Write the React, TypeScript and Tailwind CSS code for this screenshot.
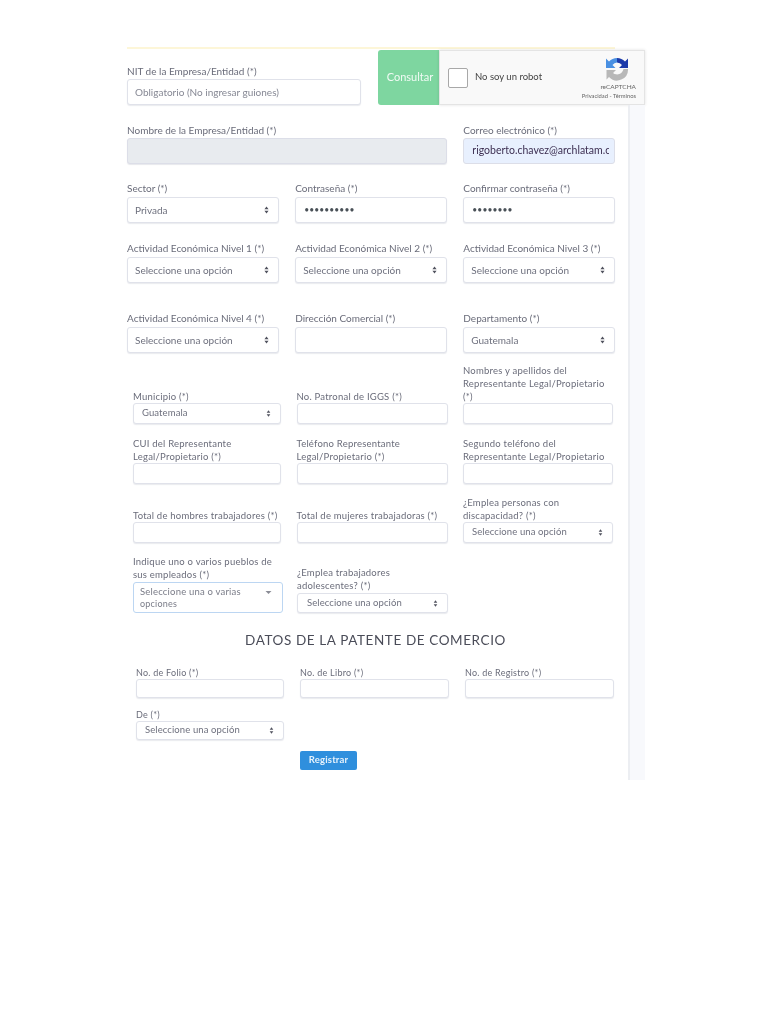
import type { ReactNode } from 'react';

const labelText = 'text-[10px] leading-[14px] text-[#6a6c7a]';
const smallText = 'text-[9.5px] leading-[13px] text-[#6a6c7a] tracking-[0.22px]';
const tinyLabel = 'text-[9px] leading-[12px] tracking-[0.25px] block';

function Carets({ className }: { className: string }) {
  return (
    <svg viewBox="0 0 6 10" className={className} fill="#50525e">
      <path d="M3 0.5 5.6 4H.4zM3 9.5.4 6h5.2z" />
    </svg>
  );
}

function Box({ className, children }: { className: string; children?: ReactNode }) {
  return (
    <div className={`flex items-center bg-white border border-[#e0e2ea] rounded-[3px] shadow-[0_1px_1px_rgba(120,125,150,0.16)] ${className}`}>
      {children}
    </div>
  );
}

function Select({ value, className, textClass, caretClass }: { value: string; className: string; textClass: string; caretClass: string }) {
  return (
    <Box className={`justify-between ${className}`}>
      <span className={textClass}>{value}</span>
      <Carets className={caretClass} />
    </Box>
  );
}

const bigSelect = (value: string) => (
  <Select value={value} className="h-[26px] pl-[7px] pr-[9px]" textClass="text-[10px] text-[#6e707e]" caretClass="w-[5px] h-[8px]" />
);
const midSelect = (value: string) => (
  <Select value={value} className="h-[21px] pl-[8px] pr-[9px]" textClass="text-[9.5px] text-[#6e707e] tracking-[0.1px]" caretClass="w-[5px] h-[7px]" />
);

function Field({ label, small, children }: { label: ReactNode; small?: boolean; children: ReactNode }) {
  return (
    <div className="flex flex-col justify-end">
      <div className={small ? smallText : labelText}>{label}</div>
      {children}
    </div>
  );
}

export default function App() {
  const bigInput = <Box className="h-[26px]" />;
  const midInput = <Box className="h-[21px]" />;
  const lowInput = <Box className="h-[19px]" />;

  return (
    <div className="min-h-[1024px] bg-white pt-[47px] pl-[127px] font-['Lato','Liberation_Sans',sans-serif] blur-[0.4px]">
      <div className="w-[518px]">
        <div className="w-[488px] h-[2px] bg-[#fdf6d8]" />
        <div className="flex h-[55px] mt-[1px]">
          <div className="w-[234px] flex flex-col justify-end">
            <div className={`${labelText} mb-[1px]`}>NIT de la Empresa/Entidad (*)</div>
            <Box className="h-[26px] pl-[7px]">
              <span className="text-[10px] text-[#868894]">Obligatorio (No ingresar guiones)</span>
            </Box>
          </div>
          <div className="ml-[17px] w-[61px] pl-[3px] bg-[#7ed6a0] rounded-l-[3px] flex items-center justify-center text-[11px] text-[#f0fbf4]">
            Consultar
          </div>
          <div className="w-[206px] bg-[#f9f9f9] border border-[#e4e4e4] shadow-[0_0_3px_rgba(0,0,0,0.12)] flex items-center justify-between pl-[8px] pr-[8px]">
            <div className="flex items-center">
              <div className="w-[20px] h-[20px] bg-white border border-[#a8a8a8] rounded-[2px]" />
              <span className="ml-[7px] text-[9.5px] text-[#444]">No soy un robot</span>
            </div>
            <div className="flex flex-col items-end pt-[2px]">
              <svg viewBox="0 0 24 24" className="w-[24px] h-[24px] mr-[7px]">
                <path d="M23 12A11 11 0 0 1 4 20L1.500 22.500V13H11L8 16A6.500 6.500 0 0 0 18.500 12Z" fill="#b8b8b8" />
                <path d="M12 1V5.500A7 7 0 0 0 7.500 8L10.500 11H1V1.500L4 4.500A11 11 0 0 1 12 1Z" fill="#4a90e2" />
                <path d="M12 1A11 11 0 0 1 20 4.500L23 1.500V11H14L17 8A7 7 0 0 0 12 5.500Z" fill="#1c3aa9" />
              </svg>
              <span className="text-[6.5px] leading-[9px] text-[#666] mt-[1px]">reCAPTCHA</span>
              <span className="text-[5.8px] leading-[9px] text-[#666] whitespace-nowrap">Privacidad - Términos</span>
            </div>
          </div>
        </div>

        <div className="flex">
          <div className="w-[501px] pb-[10px]">
            <div className="w-[488px] grid grid-cols-3 gap-x-[16.500px] mt-[18px]">
              <div className="col-span-2 flex flex-col">
                <div className={`${labelText} mb-[1px]`}>Nombre de la Empresa/Entidad (*)</div>
                <div className="h-[26px] bg-[#e8ebef] border border-[#dcdee8] rounded-[3px] shadow-[0_1px_1px_rgba(120,125,150,0.18)]" />
              </div>
              <div className="flex flex-col">
                <div className={`${labelText} mb-[1px]`}>Correo electrónico (*)</div>
                <div className="h-[26px] bg-[#e8f0fe] border border-[#dcdee8] rounded-[3px] pl-[8px] pr-[5px] flex items-center">
                  <span className="text-[10.5px] text-[#3d2f52] whitespace-nowrap overflow-hidden">rigoberto.chavez@archlatam.com</span>
                </div>
              </div>
            </div>

            <div className="w-[488px] grid grid-cols-3 gap-x-[16.500px] gap-y-[2px] mt-[17px]">
              <div className={labelText}>Sector (*)</div>
              <div className={labelText}>Contraseña (*)</div>
              <div className={labelText}>Confirmar contraseña (*)</div>
              {bigSelect('Privada')}
              <Box className="h-[26px] pl-[8px]"><span className="text-[8.5px] text-[#495057] tracking-[0.1px]">••••••••••</span></Box>
              <Box className="h-[26px] pl-[8px]"><span className="text-[8.5px] text-[#495057] tracking-[0.1px]">••••••••</span></Box>
            </div>

            <div className="w-[488px] grid grid-cols-3 gap-x-[16.500px] gap-y-[2px] mt-[18px]">
              <div className={labelText}>Actividad Económica Nivel 1 (*)</div>
              <div className={labelText}>Actividad Económica Nivel 2 (*)</div>
              <div className={labelText}>Actividad Económica Nivel 3 (*)</div>
              {bigSelect('Seleccione una opción')}
              {bigSelect('Seleccione una opción')}
              {bigSelect('Seleccione una opción')}
            </div>

            <div className="w-[488px] grid grid-cols-3 gap-x-[16.500px] gap-y-[2px] mt-[28px]">
              <div className={labelText}>Actividad Económica Nivel 4 (*)</div>
              <div className={labelText}>Dirección Comercial (*)</div>
              <div className={labelText}>Departamento (*)</div>
              {bigSelect('Seleccione una opción')}
              {bigInput}
              {bigSelect('Guatemala')}
            </div>

            <div className="ml-[6px] grid grid-cols-[148px_151px_150px] gap-x-[15.500px] mt-[11px]">
              <Field small label="Municipio (*)">{midSelect('Guatemala')}</Field>
              <Field small label="No. Patronal de IGGS (*)">{midInput}</Field>
              <Field small label={<>Nombres y apellidos del<br />Representante Legal/Propietario<br />(*)</>}>{midInput}</Field>
            </div>

            <div className="ml-[6px] grid grid-cols-[148px_151px_150px] gap-x-[15.500px] mt-[13px]">
              <Field small label={<>CUI del Representante<br />Legal/Propietario (*)</>}>{midInput}</Field>
              <Field small label={<>Teléfono Representante<br />Legal/Propietario (*)</>}>{midInput}</Field>
              <Field small label={<>Segundo teléfono del<br />Representante Legal/Propietario</>}>{midInput}</Field>
            </div>

            <div className="ml-[6px] grid grid-cols-[148px_151px_150px] gap-x-[15.500px] mt-[12px]">
              <Field small label="Total de hombres trabajadores (*)">{midInput}</Field>
              <Field small label="Total de mujeres trabajadoras (*)">{midInput}</Field>
              <Field small label={<>¿Emplea personas con<br />discapacidad? (*)</>}>{midSelect('Seleccione una opción')}</Field>
            </div>

            <div className="ml-[6px] grid grid-cols-[150px_151px] gap-x-[14px] mt-[12px]">
              <Field small label={<>Indique uno o varios pueblos de<br />sus empleados (*)</>}>
                <div className="mt-[1px] h-[31px] bg-white border border-[#bcd6f2] rounded-[3px] pl-[6px] pr-[10px] flex justify-between pt-[3px]">
                  <span className="text-[9.5px] leading-[12px] tracking-[0.2px] text-[#7a7c88]">Seleccione una o varias<br /><span className="text-[9px]">opciones</span></span>
                  <svg viewBox="0 0 8 4" className="w-[7px] h-[3px] mt-[5px]" fill="#8a8c96"><path d="M0 0h8L4 4z" /></svg>
                </div>
              </Field>
              <Field small label={<>¿Emplea trabajadores<br />adolescentes? (*)</>}>
                <Select value="Seleccione una opción" className="h-[20px] pl-[9px] pr-[9px] mt-[1px]" textClass="text-[9.5px] text-[#6e707e] tracking-[0.1px]" caretClass="w-[5px] h-[7px]" />
              </Field>
            </div>

            <h2 className="w-[497px] mt-[19px] text-center text-[13.5px] leading-[16px] font-normal text-[#4a4c58] tracking-[0.6px]">
              DATOS DE LA PATENTE DE COMERCIO
            </h2>

            <div className="ml-[9px] grid grid-cols-[148px_149px_149px] gap-x-[16px] mt-[19px]">
              <Field small label={<span className={tinyLabel}>No. de Folio (*)</span>}>{lowInput}</Field>
              <Field small label={<span className={tinyLabel}>No. de Libro (*)</span>}>{lowInput}</Field>
              <Field small label={<span className={tinyLabel}>No. de Registro (*)</span>}>{lowInput}</Field>
            </div>

            <div className="ml-[9px] w-[148px] mt-[11px]">
              <Field small label={<span className={tinyLabel}>De (*)</span>}>
                <Select value="Seleccione una opción" className="h-[19px] pl-[8px] pr-[9px]" textClass="text-[9.5px] text-[#6e707e] tracking-[0.1px]" caretClass="w-[5px] h-[7px]" />
              </Field>
            </div>

            <button className="block ml-[173px] mt-[11px] w-[57px] h-[19px] bg-[#2f8fdd] rounded-[2px] text-[9.5px] font-bold tracking-[0.2px] text-[#e6f2fc]">
              Registrar
            </button>
          </div>
          <div className="w-[17px] bg-[#f8f9fc] border-l-2 border-[#eceef2]" />
        </div>
      </div>
    </div>
  );
}
